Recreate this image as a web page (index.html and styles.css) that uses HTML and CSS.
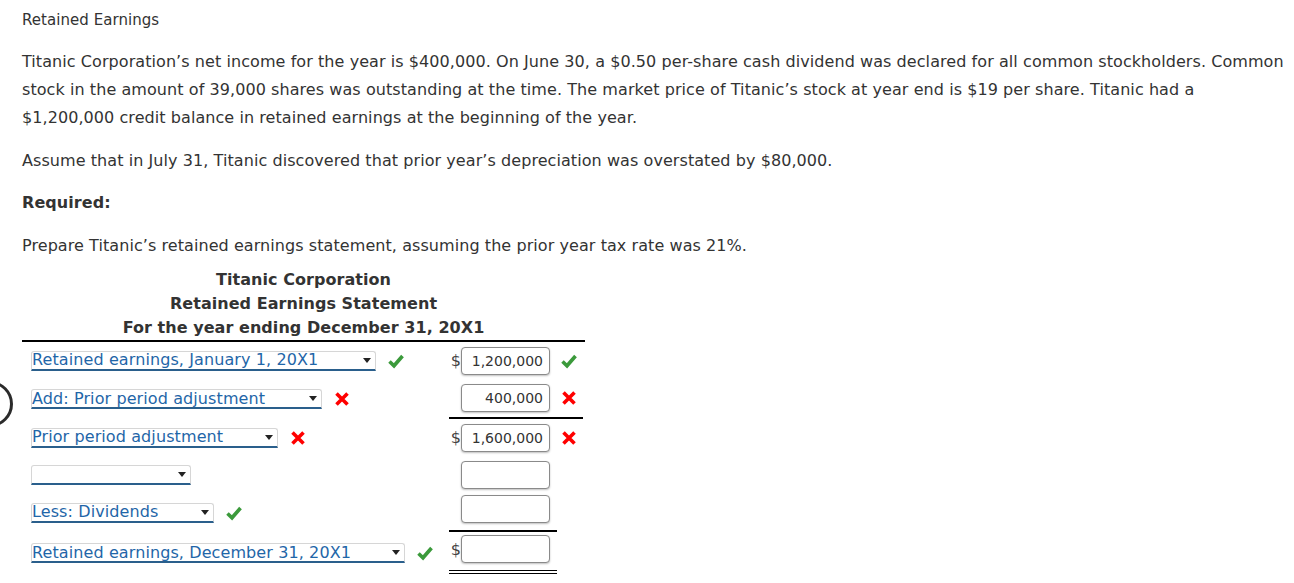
FILE: index.html
```html
<!DOCTYPE html>
<html>
<head>
<meta charset="utf-8">
<link rel="stylesheet" href="styles.css">
</head>
<body>
<div class="page">
  <div class="title">Retained Earnings</div>
  <p class="para p1">Titanic Corporation’s net income for the year is $400,000. On June 30, a $0.50 per-share cash dividend was declared for all common stockholders. Common stock in the amount of 39,000 shares was outstanding at the time. The market price of Titanic’s stock at year end is $19 per share. Titanic had a $1,200,000 credit balance in retained earnings at the beginning of the year.</p>
  <p class="para p2">Assume that in July 31, Titanic discovered that prior year’s depreciation was overstated by $80,000.</p>
  <p class="para p3"><strong>Required:</strong></p>
  <p class="para p4">Prepare Titanic’s retained earnings statement, assuming the prior year tax rate was 21%.</p>

  <div class="statement">
    <div class="heading">
      <div>Titanic Corporation</div>
      <div>Retained Earnings Statement</div>
      <div>For the year ending December 31, 20X1</div>
    </div>
    <div class="rows">
      <div class="row r1">
        <div class="label">
          <span class="dropdown w1"><span class="dd-text">Retained earnings, January 1, 20X1</span><span class="caret"></span></span>
          <svg class="mark" viewBox="0 0 16 16"><path class="ok" d="M1.5 8.5 L6 12.8 L14.5 3"/></svg>
        </div>
        <div class="dollar">$</div>
        <div class="amount"><span class="box">1,200,000</span></div>
        <div class="icon"><svg class="mark" viewBox="0 0 16 16"><path class="ok" d="M1.5 8.5 L6 12.8 L14.5 3"/></svg></div>
      </div>
      <div class="row r2">
        <div class="label">
          <span class="dropdown w2"><span class="dd-text">Add: Prior period adjustment</span><span class="caret"></span></span>
          <svg class="mark" viewBox="0 0 16 16"><path class="bad" d="M2.5 2.5 L13.5 13.5 M13.5 2.5 L2.5 13.5"/></svg>
        </div>
        <div class="dollar ruled"></div>
        <div class="amount ruled"><span class="box">400,000</span></div>
        <div class="icon ruled"><svg class="mark" viewBox="0 0 16 16"><path class="bad" d="M2.5 2.5 L13.5 13.5 M13.5 2.5 L2.5 13.5"/></svg></div>
      </div>
      <div class="row r3">
        <div class="label">
          <span class="dropdown w3"><span class="dd-text">Prior period adjustment</span><span class="caret"></span></span>
          <svg class="mark" viewBox="0 0 16 16"><path class="bad" d="M2.5 2.5 L13.5 13.5 M13.5 2.5 L2.5 13.5"/></svg>
        </div>
        <div class="dollar">$</div>
        <div class="amount"><span class="box">1,600,000</span></div>
        <div class="icon"><svg class="mark" viewBox="0 0 16 16"><path class="bad" d="M2.5 2.5 L13.5 13.5 M13.5 2.5 L2.5 13.5"/></svg></div>
      </div>
      <div class="row r4">
        <div class="label">
          <span class="dropdown w4"><span class="dd-text"></span><span class="caret"></span></span>
        </div>
        <div class="dollar"></div>
        <div class="amount"><span class="box"></span></div>
        <div class="icon"></div>
      </div>
      <div class="row r5">
        <div class="label">
          <span class="dropdown w5"><span class="dd-text">Less: Dividends</span><span class="caret"></span></span>
          <svg class="mark" viewBox="0 0 16 16"><path class="ok" d="M1.5 8.5 L6 12.8 L14.5 3"/></svg>
        </div>
        <div class="dollar ruled"></div>
        <div class="amount ruled"><span class="box"></span></div>
        <div class="icon"></div>
      </div>
      <div class="row r6">
        <div class="label">
          <span class="dropdown w6"><span class="dd-text">Retained earnings, December 31, 20X1</span><span class="caret"></span></span>
          <svg class="mark" viewBox="0 0 16 16"><path class="ok" d="M1.5 8.5 L6 12.8 L14.5 3"/></svg>
        </div>
        <div class="dollar total">$</div>
        <div class="amount total"><span class="box"></span></div>
        <div class="icon"></div>
      </div>
    </div>
  </div>
</div>
<div class="nav-circle"></div>
</body>
</html>
```

FILE: styles.css
```css
html, body {
  margin: 0;
  padding: 0;
  background: #fff;
}
body {
  font-family: "DejaVu Sans", Verdana, sans-serif;
  color: #333;
  font-size: 16px;
}
.page {
  padding: 6px 8px 0 22px;
}
.title {
  font-size: 15px;
  line-height: 28px;
  letter-spacing: 0.05px;
}
.para {
  margin: 14px 0 0;
  line-height: 28px;
  letter-spacing: 0.07px;
}
.p2 { margin-top: 15px; }
.p4 { margin-top: 15px; }
.para strong { font-weight: bold; color: #333; }

.statement {
  width: 563px;
  margin-top: 8px;
}
.heading {
  text-align: center;
  font-weight: bold;
  line-height: 24px;
  letter-spacing: 0.05px;
  border-bottom: 2px solid #000;
}
.rows { display: flex; flex-direction: column; }
.row {
  display: flex;
  align-items: center;
}
.r1 { height: 37px; }
.r2 { height: 40px; }
.r3 { height: 37px; }
.r4 { height: 37px; }
.r5 { height: 39px; }
.r6 { height: 42px; }

.label {
  width: 427px;
  padding-left: 9px;
  box-sizing: border-box;
  display: flex;
  align-items: center;
  gap: 12px;
}
.dollar {
  width: 12px;
  align-self: stretch;
  display: flex;
  align-items: center;
  justify-content: flex-end;
  box-sizing: border-box;
  font-size: 16px;
  color: #444;
}
.amount {
  width: 96px;
  align-self: stretch;
  display: flex;
  align-items: center;
  box-sizing: border-box;
}
.icon {
  width: 26px;
  align-self: stretch;
  display: flex;
  align-items: center;
  padding-left: 4px;
  box-sizing: border-box;
}
.ruled { border-bottom: 2px solid #000; }
.r5 .dollar, .r5 .amount { padding-bottom: 5px; }
.total { border-bottom: 4px double #000; }
.r6 .dollar, .r6 .amount { padding-bottom: 4px; }

.box {
  display: block;
  width: 89px;
  height: 28px;
  box-sizing: border-box;
  border: 1px solid #8a8a8a;
  border-radius: 4px;
  box-shadow: 0 1px 2px rgba(0,0,0,0.25);
  background: #fff;
  font-size: 14px;
  line-height: 26px;
  text-align: right;
  padding-right: 6px;
  color: #333;
}

.dropdown {
  display: flex;
  align-items: center;
  height: 20px;
  box-sizing: border-box;
  border: 1px solid #d6d6d6;
  border-bottom: 2px solid #2a5f8c;
  border-radius: 3px 3px 0 0;
  background: #fff;
  padding: 0 4px 0 0;
  font-size: 16px;
  letter-spacing: 0.1px;
  color: #1f66a8;
  line-height: 18px;
}
.dd-text {
  flex: 1;
  white-space: nowrap;
  overflow: hidden;
}
.caret {
  width: 0;
  height: 0;
  border-left: 4.5px solid transparent;
  border-right: 4.5px solid transparent;
  border-top: 5px solid #222;
}
.w1 { width: 345px; }
.w2 { width: 291px; }
.w3 { width: 247px; }
.w4 { width: 160px; }
.w5 { width: 183px; }
.w6 { width: 374px; }

.mark {
  width: 16px;
  height: 16px;
  flex: none;
}
.ok {
  fill: none;
  stroke: #3b9a3b;
  stroke-width: 3.6;
  stroke-linecap: butt;
  stroke-linejoin: miter;
}
.bad {
  fill: none;
  stroke: #f00;
  stroke-width: 3.6;
}

.nav-circle {
  position: absolute;
  left: -33px;
  top: 381px;
  width: 40px;
  height: 40px;
  border: 3px solid #2b2b2b;
  border-radius: 50%;
}
```
